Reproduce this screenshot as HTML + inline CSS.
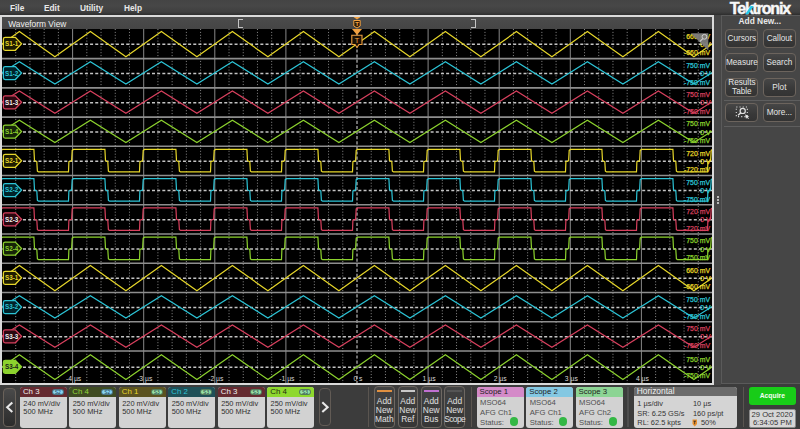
<!DOCTYPE html>
<html><head><meta charset="utf-8"><style>
*{margin:0;padding:0;box-sizing:border-box}
html,body{width:800px;height:429px;overflow:hidden;background:#3c3c3c;font-family:"Liberation Sans",sans-serif;}
.a{position:absolute}
.menu{position:absolute;top:2.6px;font-size:8.3px;font-weight:bold;color:#e8e8e8}
.btn{position:absolute;border:1px solid #6c645d;border-radius:4px;background:linear-gradient(#464646,#383838 60%,#333);color:#e6e6e6;font-size:8.2px;text-align:center;display:flex;align-items:center;justify-content:center;line-height:9px}
.card{position:absolute;top:386.5px;width:47.2px;height:41.3px;background:#d2d2d2;border-radius:3px;overflow:hidden}
.card .h{height:10px;padding-left:3.2px;font-size:7.9px;line-height:10.4px;position:relative}
.card .b{padding-left:3.6px;font-size:7.4px;line-height:8.6px;color:#303030;padding-top:3px}
.badge{position:absolute;right:3px;top:2.2px;width:12.2px;height:6.4px;border-radius:3.2px;font-size:5px;line-height:5.6px;text-align:center;color:#234;border:0.8px solid rgba(0,0,0,0.45)}
.add{position:absolute;top:386.3px;height:41.4px;width:20.5px;border:1px solid #6e6862;border-radius:4px;background:linear-gradient(#424242,#363636);color:#e0e0e0;font-size:8.4px;line-height:9px;padding-top:9.6px;display:flex;flex-direction:column;align-items:center}
.add b{font-weight:normal;white-space:nowrap;display:block}
.add i{position:absolute;left:2px;right:2px;top:3px;height:2.2px}
.sc{position:absolute;top:386.8px;width:47px;height:41px;background:#d2d2d2;border-radius:3px;overflow:hidden}
.sc .h{height:10px;padding-left:3px;font-size:7.8px;line-height:10.4px;color:#222}
.sc .b{padding-left:3.5px;font-size:7.7px;line-height:9.7px;color:#505050;padding-top:1.7px;position:relative}
</style></head><body>
<div class="a" style="left:0;top:0;width:800px;height:15px;background:linear-gradient(#444444,#474747 40%,#3f3f3f 80%,#2e2e2e)"></div>
<div class="menu" style="left:10px">File</div>
<div class="menu" style="left:44px">Edit</div>
<div class="menu" style="left:80px">Utility</div>
<div class="menu" style="left:124px">Help</div>
<div class="a" style="left:0;top:15px;width:714px;height:370px;background:#dadada"></div>
<div class="a" style="left:2px;top:17px;width:710px;height:12px;background:linear-gradient(#4c4c4c,#454545)"></div>
<div class="a" style="left:8.2px;top:18.5px;font-size:8.4px;color:#f0f0f0">Waveform View</div>
<div class="a" style="left:238px;top:19px;width:4.5px;height:9px;border:1.4px solid #c4c4c4;border-right:none"></div>
<div class="a" style="left:471px;top:19px;width:4.5px;height:9px;border:1.4px solid #c4c4c4;border-left:none"></div>
<div class="a" style="left:714px;top:15px;width:7px;height:370px;background:#464646"></div>
<div class="a" style="left:721px;top:15px;width:1px;height:369px;background:#5a5a5a"></div>
<div class="a" style="left:716.8px;top:195.6px;width:2px;height:2px;border-radius:1px;background:#e0e0e0"></div>
<div class="a" style="left:716.8px;top:198.8px;width:2px;height:2px;border-radius:1px;background:#e0e0e0"></div>
<div class="a" style="left:716.8px;top:202px;width:2px;height:2px;border-radius:1px;background:#e0e0e0"></div>
<div class="a" style="left:721px;top:15px;width:79px;height:369px;background:#464646;border:1px solid #5a5a5a;border-right:none"></div>
<div class="a" style="left:729.8px;top:0.2px;font-size:16px;font-weight:bold;color:#f8f8f8;letter-spacing:-1.2px;-webkit-text-stroke:0.45px #f8f8f8">Tektronix</div>
<svg class="a" style="left:0;top:0" width="800" height="20"><path d="M745.3 14.2 H748.3 L753.6 6.1 H750.6Z" fill="#22c8e8"/></svg>
<div class="a" style="left:738.5px;top:15.5px;font-size:8.4px;font-weight:bold;color:#e8e8e8">Add New...</div>
<div class="btn" style="left:725.3px;top:29.4px;width:33.2px;height:19px">Cursors</div>
<div class="btn" style="left:763px;top:29.4px;width:32.8px;height:19px">Callout</div>
<div class="btn" style="left:725.3px;top:53.4px;width:33.2px;height:19px">Measure</div>
<div class="btn" style="left:763px;top:53.4px;width:32.8px;height:19px">Search</div>
<div class="btn" style="left:725.3px;top:77.5px;width:33.2px;height:19px">Results<br>Table</div>
<div class="btn" style="left:763px;top:77.5px;width:32.8px;height:19px">Plot</div>
<div class="a" style="left:723.5px;top:99.5px;width:76px;height:1.2px;background:#5e5e5e"></div>
<div class="btn" style="left:725.3px;top:102.7px;width:33.2px;height:19.5px"></div>
<svg class="a" style="left:0;top:0" width="800" height="130"><path d="M736.3 107H747.3V116.6H736.3Z" fill="none" stroke="#dcdcdc" stroke-width="1.1" stroke-dasharray="1.1 2.1"/><circle cx="742.7" cy="110.9" r="2.6" fill="none" stroke="#e0e0e0" stroke-width="1.2"/><path d="M740.8 112.9L738 115.3" stroke="#e0e0e0" stroke-width="1.4"/><path d="M745.2 114.3L749.2 116.4L747.6 117L748.9 118.5L748.2 119.1L746.9 117.6L746 118.9Z" fill="#e8e8e8"/></svg>
<div class="btn" style="left:763px;top:102.7px;width:32.8px;height:19.5px">More...</div>
<div class="a" style="left:723.5px;top:126px;width:76px;height:1.2px;background:#5e5e5e"></div>
<svg width="800" height="429" viewBox="0 0 800 429" style="position:absolute;left:0;top:0">
<rect x="2" y="29" width="710" height="354" fill="#000"/>
<path d="M15.72 29V383M29.94 29V383M44.16 29V383M58.38 29V383M86.82 29V383M101.04 29V383M115.26 29V383M129.48 29V383M157.92 29V383M172.14 29V383M186.36 29V383M200.58 29V383M229.02 29V383M243.24 29V383M257.46 29V383M271.68 29V383M300.12 29V383M314.34 29V383M328.56 29V383M342.78 29V383M371.22 29V383M385.44 29V383M399.66 29V383M413.88 29V383M442.32 29V383M456.54 29V383M470.76 29V383M484.98 29V383M513.42 29V383M527.64 29V383M541.86 29V383M556.08 29V383M584.52 29V383M598.74 29V383M612.96 29V383M627.18 29V383M655.62 29V383M669.84 29V383M684.06 29V383M698.28 29V383" stroke="#8a8a8a" stroke-width="1" stroke-dasharray="1 1.9" fill="none"/>
<path d="M72.60 29V383M143.70 29V383M214.80 29V383M285.90 29V383M428.10 29V383M499.20 29V383M570.30 29V383M641.40 29V383" stroke="#888888" stroke-width="1" fill="none"/>
<path d="M357.00 29V383" stroke="#c8c8c8" stroke-width="1.1" stroke-dasharray="3.2 1.9" fill="none"/>
<path d="M2 44.20H712M2 73.45H712M2 102.70H712M2 131.95H712M2 161.20H712M2 190.45H712M2 219.70H712M2 248.95H712M2 278.20H712M2 307.45H712M2 336.70H712M2 367.20H712" stroke="#c4c4c4" stroke-width="1.4" stroke-dasharray="3.0 2.16" stroke-dashoffset="4.8" fill="none"/>
<path d="M2 58.60H712M2 87.84H712M2 117.08H712M2 146.32H712M2 175.56H712M2 204.80H712M2 234.04H712M2 263.28H712M2 292.52H712M2 321.76H712M2 351.00H712" stroke="#8e8e8e" stroke-width="1.6" fill="none"/>
<clipPath id="pc"><rect x="2" y="29" width="710" height="354"/></clipPath>
<g clip-path="url(#pc)" fill="none" stroke-width="1.2" stroke-linejoin="miter">
<path d="M-87.10 56.80 L-51.60 31.60 L-16.10 56.80 L19.40 31.60 L54.90 56.80 L90.40 31.60 L125.90 56.80 L161.40 31.60 L196.90 56.80 L232.40 31.60 L267.90 56.80 L303.40 31.60 L338.90 56.80 L374.40 31.60 L409.90 56.80 L445.40 31.60 L480.90 56.80 L516.40 31.60 L551.90 56.80 L587.40 31.60 L622.90 56.80 L658.40 31.60 L693.90 56.80 L729.40 31.60 L764.90 56.80 L800.40 31.60" stroke="#e6d62a"/>
<path d="M-87.10 84.05 L-51.60 61.65 L-16.10 84.05 L19.40 61.65 L54.90 84.05 L90.40 61.65 L125.90 84.05 L161.40 61.65 L196.90 84.05 L232.40 61.65 L267.90 84.05 L303.40 61.65 L338.90 84.05 L374.40 61.65 L409.90 84.05 L445.40 61.65 L480.90 84.05 L516.40 61.65 L551.90 84.05 L587.40 61.65 L622.90 84.05 L658.40 61.65 L693.90 84.05 L729.40 61.65 L764.90 84.05 L800.40 61.65" stroke="#2cc4d6"/>
<path d="M-87.10 113.30 L-51.60 90.90 L-16.10 113.30 L19.40 90.90 L54.90 113.30 L90.40 90.90 L125.90 113.30 L161.40 90.90 L196.90 113.30 L232.40 90.90 L267.90 113.30 L303.40 90.90 L338.90 113.30 L374.40 90.90 L409.90 113.30 L445.40 90.90 L480.90 113.30 L516.40 90.90 L551.90 113.30 L587.40 90.90 L622.90 113.30 L658.40 90.90 L693.90 113.30 L729.40 90.90 L764.90 113.30 L800.40 90.90" stroke="#d8405e"/>
<path d="M-87.10 142.55 L-51.60 120.15 L-16.10 142.55 L19.40 120.15 L54.90 142.55 L90.40 120.15 L125.90 142.55 L161.40 120.15 L196.90 142.55 L232.40 120.15 L267.90 142.55 L303.40 120.15 L338.90 142.55 L374.40 120.15 L409.90 142.55 L445.40 120.15 L480.90 142.55 L516.40 120.15 L551.90 142.55 L587.40 120.15 L622.90 142.55 L658.40 120.15 L693.90 142.55 L729.40 120.15 L764.90 142.55 L800.40 120.15" stroke="#8cd22e"/>
<path d="M-73.50 171.90 L-73.10 161.70 L-70.40 160.70 L-69.80 150.40 L-68.50 149.40 L-37.10 149.40 L-36.50 160.70 L-34.20 161.70 L-33.60 171.10 L-32.40 171.90 L-2.50 171.90 L-2.10 161.70 L0.60 160.70 L1.20 150.40 L2.50 149.40 L33.90 149.40 L34.50 160.70 L36.80 161.70 L37.40 171.10 L38.60 171.90 L68.50 171.90 L68.90 161.70 L71.60 160.70 L72.20 150.40 L73.50 149.40 L104.90 149.40 L105.50 160.70 L107.80 161.70 L108.40 171.10 L109.60 171.90 L139.50 171.90 L139.90 161.70 L142.60 160.70 L143.20 150.40 L144.50 149.40 L175.90 149.40 L176.50 160.70 L178.80 161.70 L179.40 171.10 L180.60 171.90 L210.50 171.90 L210.90 161.70 L213.60 160.70 L214.20 150.40 L215.50 149.40 L246.90 149.40 L247.50 160.70 L249.80 161.70 L250.40 171.10 L251.60 171.90 L281.50 171.90 L281.90 161.70 L284.60 160.70 L285.20 150.40 L286.50 149.40 L317.90 149.40 L318.50 160.70 L320.80 161.70 L321.40 171.10 L322.60 171.90 L352.50 171.90 L352.90 161.70 L355.60 160.70 L356.20 150.40 L357.50 149.40 L388.90 149.40 L389.50 160.70 L391.80 161.70 L392.40 171.10 L393.60 171.90 L423.50 171.90 L423.90 161.70 L426.60 160.70 L427.20 150.40 L428.50 149.40 L459.90 149.40 L460.50 160.70 L462.80 161.70 L463.40 171.10 L464.60 171.90 L494.50 171.90 L494.90 161.70 L497.60 160.70 L498.20 150.40 L499.50 149.40 L530.90 149.40 L531.50 160.70 L533.80 161.70 L534.40 171.10 L535.60 171.90 L565.50 171.90 L565.90 161.70 L568.60 160.70 L569.20 150.40 L570.50 149.40 L601.90 149.40 L602.50 160.70 L604.80 161.70 L605.40 171.10 L606.60 171.90 L636.50 171.90 L636.90 161.70 L639.60 160.70 L640.20 150.40 L641.50 149.40 L672.90 149.40 L673.50 160.70 L675.80 161.70 L676.40 171.10 L677.60 171.90 L707.50 171.90 L707.90 161.70 L710.60 160.70 L711.20 150.40 L712.50 149.40 L743.90 149.40 L744.50 160.70 L746.80 161.70 L747.40 171.10 L748.60 171.90 L778.50 171.90 L778.90 161.70 L781.60 160.70 L782.20 150.40 L783.50 149.40 L814.90 149.40 L815.50 160.70 L817.80 161.70 L818.40 171.10 L819.60 171.90" stroke="#e6d62a"/>
<path d="M-73.50 201.15 L-73.10 190.95 L-70.40 189.95 L-69.80 179.65 L-68.50 178.65 L-37.10 178.65 L-36.50 189.95 L-34.20 190.95 L-33.60 200.35 L-32.40 201.15 L-2.50 201.15 L-2.10 190.95 L0.60 189.95 L1.20 179.65 L2.50 178.65 L33.90 178.65 L34.50 189.95 L36.80 190.95 L37.40 200.35 L38.60 201.15 L68.50 201.15 L68.90 190.95 L71.60 189.95 L72.20 179.65 L73.50 178.65 L104.90 178.65 L105.50 189.95 L107.80 190.95 L108.40 200.35 L109.60 201.15 L139.50 201.15 L139.90 190.95 L142.60 189.95 L143.20 179.65 L144.50 178.65 L175.90 178.65 L176.50 189.95 L178.80 190.95 L179.40 200.35 L180.60 201.15 L210.50 201.15 L210.90 190.95 L213.60 189.95 L214.20 179.65 L215.50 178.65 L246.90 178.65 L247.50 189.95 L249.80 190.95 L250.40 200.35 L251.60 201.15 L281.50 201.15 L281.90 190.95 L284.60 189.95 L285.20 179.65 L286.50 178.65 L317.90 178.65 L318.50 189.95 L320.80 190.95 L321.40 200.35 L322.60 201.15 L352.50 201.15 L352.90 190.95 L355.60 189.95 L356.20 179.65 L357.50 178.65 L388.90 178.65 L389.50 189.95 L391.80 190.95 L392.40 200.35 L393.60 201.15 L423.50 201.15 L423.90 190.95 L426.60 189.95 L427.20 179.65 L428.50 178.65 L459.90 178.65 L460.50 189.95 L462.80 190.95 L463.40 200.35 L464.60 201.15 L494.50 201.15 L494.90 190.95 L497.60 189.95 L498.20 179.65 L499.50 178.65 L530.90 178.65 L531.50 189.95 L533.80 190.95 L534.40 200.35 L535.60 201.15 L565.50 201.15 L565.90 190.95 L568.60 189.95 L569.20 179.65 L570.50 178.65 L601.90 178.65 L602.50 189.95 L604.80 190.95 L605.40 200.35 L606.60 201.15 L636.50 201.15 L636.90 190.95 L639.60 189.95 L640.20 179.65 L641.50 178.65 L672.90 178.65 L673.50 189.95 L675.80 190.95 L676.40 200.35 L677.60 201.15 L707.50 201.15 L707.90 190.95 L710.60 189.95 L711.20 179.65 L712.50 178.65 L743.90 178.65 L744.50 189.95 L746.80 190.95 L747.40 200.35 L748.60 201.15 L778.50 201.15 L778.90 190.95 L781.60 189.95 L782.20 179.65 L783.50 178.65 L814.90 178.65 L815.50 189.95 L817.80 190.95 L818.40 200.35 L819.60 201.15" stroke="#2cc4d6"/>
<path d="M-73.50 230.40 L-73.10 220.20 L-70.40 219.20 L-69.80 208.90 L-68.50 207.90 L-37.10 207.90 L-36.50 219.20 L-34.20 220.20 L-33.60 229.60 L-32.40 230.40 L-2.50 230.40 L-2.10 220.20 L0.60 219.20 L1.20 208.90 L2.50 207.90 L33.90 207.90 L34.50 219.20 L36.80 220.20 L37.40 229.60 L38.60 230.40 L68.50 230.40 L68.90 220.20 L71.60 219.20 L72.20 208.90 L73.50 207.90 L104.90 207.90 L105.50 219.20 L107.80 220.20 L108.40 229.60 L109.60 230.40 L139.50 230.40 L139.90 220.20 L142.60 219.20 L143.20 208.90 L144.50 207.90 L175.90 207.90 L176.50 219.20 L178.80 220.20 L179.40 229.60 L180.60 230.40 L210.50 230.40 L210.90 220.20 L213.60 219.20 L214.20 208.90 L215.50 207.90 L246.90 207.90 L247.50 219.20 L249.80 220.20 L250.40 229.60 L251.60 230.40 L281.50 230.40 L281.90 220.20 L284.60 219.20 L285.20 208.90 L286.50 207.90 L317.90 207.90 L318.50 219.20 L320.80 220.20 L321.40 229.60 L322.60 230.40 L352.50 230.40 L352.90 220.20 L355.60 219.20 L356.20 208.90 L357.50 207.90 L388.90 207.90 L389.50 219.20 L391.80 220.20 L392.40 229.60 L393.60 230.40 L423.50 230.40 L423.90 220.20 L426.60 219.20 L427.20 208.90 L428.50 207.90 L459.90 207.90 L460.50 219.20 L462.80 220.20 L463.40 229.60 L464.60 230.40 L494.50 230.40 L494.90 220.20 L497.60 219.20 L498.20 208.90 L499.50 207.90 L530.90 207.90 L531.50 219.20 L533.80 220.20 L534.40 229.60 L535.60 230.40 L565.50 230.40 L565.90 220.20 L568.60 219.20 L569.20 208.90 L570.50 207.90 L601.90 207.90 L602.50 219.20 L604.80 220.20 L605.40 229.60 L606.60 230.40 L636.50 230.40 L636.90 220.20 L639.60 219.20 L640.20 208.90 L641.50 207.90 L672.90 207.90 L673.50 219.20 L675.80 220.20 L676.40 229.60 L677.60 230.40 L707.50 230.40 L707.90 220.20 L710.60 219.20 L711.20 208.90 L712.50 207.90 L743.90 207.90 L744.50 219.20 L746.80 220.20 L747.40 229.60 L748.60 230.40 L778.50 230.40 L778.90 220.20 L781.60 219.20 L782.20 208.90 L783.50 207.90 L814.90 207.90 L815.50 219.20 L817.80 220.20 L818.40 229.60 L819.60 230.40" stroke="#d8405e"/>
<path d="M-73.50 259.65 L-73.10 249.45 L-70.40 248.45 L-69.80 238.15 L-68.50 237.15 L-37.10 237.15 L-36.50 248.45 L-34.20 249.45 L-33.60 258.85 L-32.40 259.65 L-2.50 259.65 L-2.10 249.45 L0.60 248.45 L1.20 238.15 L2.50 237.15 L33.90 237.15 L34.50 248.45 L36.80 249.45 L37.40 258.85 L38.60 259.65 L68.50 259.65 L68.90 249.45 L71.60 248.45 L72.20 238.15 L73.50 237.15 L104.90 237.15 L105.50 248.45 L107.80 249.45 L108.40 258.85 L109.60 259.65 L139.50 259.65 L139.90 249.45 L142.60 248.45 L143.20 238.15 L144.50 237.15 L175.90 237.15 L176.50 248.45 L178.80 249.45 L179.40 258.85 L180.60 259.65 L210.50 259.65 L210.90 249.45 L213.60 248.45 L214.20 238.15 L215.50 237.15 L246.90 237.15 L247.50 248.45 L249.80 249.45 L250.40 258.85 L251.60 259.65 L281.50 259.65 L281.90 249.45 L284.60 248.45 L285.20 238.15 L286.50 237.15 L317.90 237.15 L318.50 248.45 L320.80 249.45 L321.40 258.85 L322.60 259.65 L352.50 259.65 L352.90 249.45 L355.60 248.45 L356.20 238.15 L357.50 237.15 L388.90 237.15 L389.50 248.45 L391.80 249.45 L392.40 258.85 L393.60 259.65 L423.50 259.65 L423.90 249.45 L426.60 248.45 L427.20 238.15 L428.50 237.15 L459.90 237.15 L460.50 248.45 L462.80 249.45 L463.40 258.85 L464.60 259.65 L494.50 259.65 L494.90 249.45 L497.60 248.45 L498.20 238.15 L499.50 237.15 L530.90 237.15 L531.50 248.45 L533.80 249.45 L534.40 258.85 L535.60 259.65 L565.50 259.65 L565.90 249.45 L568.60 248.45 L569.20 238.15 L570.50 237.15 L601.90 237.15 L602.50 248.45 L604.80 249.45 L605.40 258.85 L606.60 259.65 L636.50 259.65 L636.90 249.45 L639.60 248.45 L640.20 238.15 L641.50 237.15 L672.90 237.15 L673.50 248.45 L675.80 249.45 L676.40 258.85 L677.60 259.65 L707.50 259.65 L707.90 249.45 L710.60 248.45 L711.20 238.15 L712.50 237.15 L743.90 237.15 L744.50 248.45 L746.80 249.45 L747.40 258.85 L748.60 259.65 L778.50 259.65 L778.90 249.45 L781.60 248.45 L782.20 238.15 L783.50 237.15 L814.90 237.15 L815.50 248.45 L817.80 249.45 L818.40 258.85 L819.60 259.65" stroke="#8cd22e"/>
<path d="M-87.10 290.80 L-51.60 265.60 L-16.10 290.80 L19.40 265.60 L54.90 290.80 L90.40 265.60 L125.90 290.80 L161.40 265.60 L196.90 290.80 L232.40 265.60 L267.90 290.80 L303.40 265.60 L338.90 290.80 L374.40 265.60 L409.90 290.80 L445.40 265.60 L480.90 290.80 L516.40 265.60 L551.90 290.80 L587.40 265.60 L622.90 290.80 L658.40 265.60 L693.90 290.80 L729.40 265.60 L764.90 290.80 L800.40 265.60" stroke="#e6d62a"/>
<path d="M-87.10 318.05 L-51.60 295.65 L-16.10 318.05 L19.40 295.65 L54.90 318.05 L90.40 295.65 L125.90 318.05 L161.40 295.65 L196.90 318.05 L232.40 295.65 L267.90 318.05 L303.40 295.65 L338.90 318.05 L374.40 295.65 L409.90 318.05 L445.40 295.65 L480.90 318.05 L516.40 295.65 L551.90 318.05 L587.40 295.65 L622.90 318.05 L658.40 295.65 L693.90 318.05 L729.40 295.65 L764.90 318.05 L800.40 295.65" stroke="#2cc4d6"/>
<path d="M-87.10 347.30 L-51.60 324.90 L-16.10 347.30 L19.40 324.90 L54.90 347.30 L90.40 324.90 L125.90 347.30 L161.40 324.90 L196.90 347.30 L232.40 324.90 L267.90 347.30 L303.40 324.90 L338.90 347.30 L374.40 324.90 L409.90 347.30 L445.40 324.90 L480.90 347.30 L516.40 324.90 L551.90 347.30 L587.40 324.90 L622.90 347.30 L658.40 324.90 L693.90 347.30 L729.40 324.90 L764.90 347.30 L800.40 324.90" stroke="#d8405e"/>
<path d="M-87.10 379.60 L-51.60 354.80 L-16.10 379.60 L19.40 354.80 L54.90 379.60 L90.40 354.80 L125.90 379.60 L161.40 354.80 L196.90 379.60 L232.40 354.80 L267.90 379.60 L303.40 354.80 L338.90 379.60 L374.40 354.80 L409.90 379.60 L445.40 354.80 L480.90 379.60 L516.40 354.80 L551.90 379.60 L587.40 354.80 L622.90 379.60 L658.40 354.80 L693.90 379.60 L729.40 354.80 L764.90 379.60 L800.40 354.80" stroke="#8cd22e"/>
</g>
<g font-family="Liberation Sans" font-size="6.9" fill="#e6d62a" stroke="#e6d62a" stroke-width="0.25" text-anchor="end"><text x="710" y="38.6">660 mV</text><text x="710.5" y="46.8">0 V</text><text x="710" y="55.4">-660 mV</text></g>
<g font-family="Liberation Sans" font-size="6.9" fill="#2cc4d6" stroke="#2cc4d6" stroke-width="0.25" text-anchor="end"><text x="710" y="67.9">750 mV</text><text x="710.5" y="76.0">0 V</text><text x="710" y="84.7">-750 mV</text></g>
<g font-family="Liberation Sans" font-size="6.9" fill="#d8405e" stroke="#d8405e" stroke-width="0.25" text-anchor="end"><text x="710" y="97.1">750 mV</text><text x="710.5" y="105.3">0 V</text><text x="710" y="113.9">-750 mV</text></g>
<g font-family="Liberation Sans" font-size="6.9" fill="#8cd22e" stroke="#8cd22e" stroke-width="0.25" text-anchor="end"><text x="710" y="126.3">750 mV</text><text x="710.5" y="134.5">0 V</text><text x="710" y="143.1">-750 mV</text></g>
<g font-family="Liberation Sans" font-size="6.9" fill="#e6d62a" stroke="#e6d62a" stroke-width="0.25" text-anchor="end"><text x="710" y="155.6">720 mV</text><text x="710.5" y="163.8">0 V</text><text x="710" y="172.4">-720 mV</text></g>
<g font-family="Liberation Sans" font-size="6.9" fill="#2cc4d6" stroke="#2cc4d6" stroke-width="0.25" text-anchor="end"><text x="710" y="184.8">750 mV</text><text x="710.5" y="193.0">0 V</text><text x="710" y="201.6">-750 mV</text></g>
<g font-family="Liberation Sans" font-size="6.9" fill="#d8405e" stroke="#d8405e" stroke-width="0.25" text-anchor="end"><text x="710" y="214.1">720 mV</text><text x="710.5" y="222.3">0 V</text><text x="710" y="230.9">-720 mV</text></g>
<g font-family="Liberation Sans" font-size="6.9" fill="#8cd22e" stroke="#8cd22e" stroke-width="0.25" text-anchor="end"><text x="710" y="243.3">750 mV</text><text x="710.5" y="251.5">0 V</text><text x="710" y="260.1">-750 mV</text></g>
<g font-family="Liberation Sans" font-size="6.9" fill="#e6d62a" stroke="#e6d62a" stroke-width="0.25" text-anchor="end"><text x="710" y="272.6">660 mV</text><text x="710.5" y="280.8">0 V</text><text x="710" y="289.4">-660 mV</text></g>
<g font-family="Liberation Sans" font-size="6.9" fill="#2cc4d6" stroke="#2cc4d6" stroke-width="0.25" text-anchor="end"><text x="710" y="301.8">750 mV</text><text x="710.5" y="310.1">0 V</text><text x="710" y="318.6">-750 mV</text></g>
<g font-family="Liberation Sans" font-size="6.9" fill="#d8405e" stroke="#d8405e" stroke-width="0.25" text-anchor="end"><text x="710" y="331.1">750 mV</text><text x="710.5" y="339.3">0 V</text><text x="710" y="347.9">-750 mV</text></g>
<g font-family="Liberation Sans" font-size="6.9" fill="#8cd22e" stroke="#8cd22e" stroke-width="0.25" text-anchor="end"><text x="710" y="361.6">750 mV</text><text x="710.5" y="369.8">0 V</text><text x="710" y="378.4">-750 mV</text></g>
<path d="M5.2 37.3 H15.3 L21.6 43.8 L15.3 50.3 H5.2 Q3.4 50.3 3.4 48.5 V39.1 Q3.4 37.3 5.2 37.3Z" fill="#1e1c00" stroke="#e6d62a" stroke-width="1.25"/>
<text x="11.7" y="46.2" font-family="Liberation Sans" font-weight="bold" font-size="6.3" fill="#e6d62a" text-anchor="middle">S1-1</text>
<path d="M5.2 66.5 H15.3 L21.6 73.0 L15.3 79.5 H5.2 Q3.4 79.5 3.4 77.8 V68.3 Q3.4 66.5 5.2 66.5Z" fill="#00232a" stroke="#2cc4d6" stroke-width="1.25"/>
<text x="11.7" y="75.5" font-family="Liberation Sans" font-weight="bold" font-size="6.3" fill="#2cc4d6" text-anchor="middle">S1-2</text>
<path d="M5.2 95.8 H15.3 L21.6 102.3 L15.3 108.8 H5.2 Q3.4 108.8 3.4 107.0 V97.6 Q3.4 95.8 5.2 95.8Z" fill="#2a0810" stroke="#d8405e" stroke-width="1.25"/>
<text x="11.7" y="104.7" font-family="Liberation Sans" font-weight="bold" font-size="6.3" fill="#f0f0f0" text-anchor="middle">S1-3</text>
<path d="M5.2 125.0 H15.3 L21.6 131.5 L15.3 138.0 H5.2 Q3.4 138.0 3.4 136.2 V126.8 Q3.4 125.0 5.2 125.0Z" fill="#162408" stroke="#8cd22e" stroke-width="1.25"/>
<text x="11.7" y="133.9" font-family="Liberation Sans" font-weight="bold" font-size="6.3" fill="#8cd22e" text-anchor="middle">S1-4</text>
<path d="M5.2 154.3 H15.3 L21.6 160.8 L15.3 167.3 H5.2 Q3.4 167.3 3.4 165.5 V156.1 Q3.4 154.3 5.2 154.3Z" fill="#1e1c00" stroke="#e6d62a" stroke-width="1.25"/>
<text x="11.7" y="163.2" font-family="Liberation Sans" font-weight="bold" font-size="6.3" fill="#e6d62a" text-anchor="middle">S2-1</text>
<path d="M5.2 183.5 H15.3 L21.6 190.0 L15.3 196.5 H5.2 Q3.4 196.5 3.4 194.7 V185.3 Q3.4 183.5 5.2 183.5Z" fill="#00232a" stroke="#2cc4d6" stroke-width="1.25"/>
<text x="11.7" y="192.4" font-family="Liberation Sans" font-weight="bold" font-size="6.3" fill="#2cc4d6" text-anchor="middle">S2-2</text>
<path d="M5.2 212.8 H15.3 L21.6 219.3 L15.3 225.8 H5.2 Q3.4 225.8 3.4 224.0 V214.6 Q3.4 212.8 5.2 212.8Z" fill="#2a0810" stroke="#d8405e" stroke-width="1.25"/>
<text x="11.7" y="221.7" font-family="Liberation Sans" font-weight="bold" font-size="6.3" fill="#f0f0f0" text-anchor="middle">S2-3</text>
<path d="M5.2 242.0 H15.3 L21.6 248.5 L15.3 255.0 H5.2 Q3.4 255.0 3.4 253.2 V243.8 Q3.4 242.0 5.2 242.0Z" fill="#162408" stroke="#8cd22e" stroke-width="1.25"/>
<text x="11.7" y="250.9" font-family="Liberation Sans" font-weight="bold" font-size="6.3" fill="#8cd22e" text-anchor="middle">S2-4</text>
<path d="M5.2 271.3 H15.3 L21.6 277.8 L15.3 284.3 H5.2 Q3.4 284.3 3.4 282.5 V273.1 Q3.4 271.3 5.2 271.3Z" fill="#1e1c00" stroke="#e6d62a" stroke-width="1.25"/>
<text x="11.7" y="280.2" font-family="Liberation Sans" font-weight="bold" font-size="6.3" fill="#e6d62a" text-anchor="middle">S3-1</text>
<path d="M5.2 300.6 H15.3 L21.6 307.1 L15.3 313.6 H5.2 Q3.4 313.6 3.4 311.8 V302.4 Q3.4 300.6 5.2 300.6Z" fill="#00232a" stroke="#2cc4d6" stroke-width="1.25"/>
<text x="11.7" y="309.4" font-family="Liberation Sans" font-weight="bold" font-size="6.3" fill="#2cc4d6" text-anchor="middle">S3-2</text>
<path d="M5.2 329.8 H15.3 L21.6 336.3 L15.3 342.8 H5.2 Q3.4 342.8 3.4 341.0 V331.6 Q3.4 329.8 5.2 329.8Z" fill="#2a0810" stroke="#d8405e" stroke-width="1.25"/>
<text x="11.7" y="338.7" font-family="Liberation Sans" font-weight="bold" font-size="6.3" fill="#f0f0f0" text-anchor="middle">S3-3</text>
<path d="M5.2 360.3 H15.3 L21.6 366.8 L15.3 373.3 H5.2 Q3.4 373.3 3.4 371.5 V362.1 Q3.4 360.3 5.2 360.3Z" fill="#8cd22e" stroke="#8cd22e" stroke-width="1.25"/>
<text x="11.7" y="369.2" font-family="Liberation Sans" font-weight="bold" font-size="6.3" fill="#1a1a1a" text-anchor="middle">S3-4</text>
<text x="73.6" y="381" font-family="Liberation Sans" font-size="6.8" fill="#d8d8d8" text-anchor="middle">-4 µs</text>
<text x="144.7" y="381" font-family="Liberation Sans" font-size="6.8" fill="#d8d8d8" text-anchor="middle">-3 µs</text>
<text x="215.8" y="381" font-family="Liberation Sans" font-size="6.8" fill="#d8d8d8" text-anchor="middle">-2 µs</text>
<text x="286.9" y="381" font-family="Liberation Sans" font-size="6.8" fill="#d8d8d8" text-anchor="middle">-1 µs</text>
<text x="358.0" y="381" font-family="Liberation Sans" font-size="6.8" fill="#d8d8d8" text-anchor="middle">0 s</text>
<text x="429.1" y="381" font-family="Liberation Sans" font-size="6.8" fill="#d8d8d8" text-anchor="middle">1 µs</text>
<text x="500.2" y="381" font-family="Liberation Sans" font-size="6.8" fill="#d8d8d8" text-anchor="middle">2 µs</text>
<text x="571.3" y="381" font-family="Liberation Sans" font-size="6.8" fill="#d8d8d8" text-anchor="middle">3 µs</text>
<text x="642.4" y="381" font-family="Liberation Sans" font-size="6.8" fill="#d8d8d8" text-anchor="middle">4 µs</text>
<path d="M690.8 33.2 H708.3 V50.4 Z" fill="#7c7c7c" fill-opacity="0.95"/>
<circle cx="704.4" cy="36.8" r="2.4" fill="none" stroke="#d0d0d0" stroke-width="1"/><path d="M702.7 38.6 L699.8 41.6" stroke="#d0d0d0" stroke-width="1.2"/>
<path d="M353.5 17 H360.5 L357 19.5Z" fill="#f0a040"/>
<path d="M353.8 20.5 H360.2 V26 L357 28 L353.8 26Z" fill="#2a1a08" stroke="#f0a040" stroke-width="1"/>
<text x="357" y="25.6" font-family="Liberation Sans" font-size="6" font-weight="bold" fill="#f0a040" text-anchor="middle">T</text>
<path d="M352 29 H362 L357 35Z" fill="#f0a040"/>
<path d="M351.8 35.2 H362 V44.5 H359 L357 47.5 L355 44.5 H351.8Z" fill="#1a1005" stroke="#f0a040" stroke-width="1.1"/>
<text x="357" y="42.8" font-family="Liberation Sans" font-size="8" fill="#f0a040" text-anchor="middle">T</text>
</svg>

<div class="a" style="left:0;top:385px;width:800px;height:44px;background:#3c3c3c"></div>
<div class="a" style="left:2.9px;top:387.8px;width:13px;height:39px;border:1px solid #6a625a;border-radius:4px;background:linear-gradient(#4a4a4a,#3a3a3a 50%,#2c2c2c)"></div>
<div class="a" style="left:318.8px;top:387.8px;width:12.3px;height:38.5px;border:1px solid #625b55;border-radius:4px;background:#3c3c3c"></div>
<svg class="a" style="left:0;top:0" width="800" height="429"><path d="M12.3 402.5 L7.2 407.3 L12.3 412" fill="none" stroke="#e8e8e8" stroke-width="2.1"/><path d="M322.3 402.3 L327.6 407.2 L322.3 412" fill="none" stroke="#e8e8e8" stroke-width="2.1"/></svg>
<div class="card" style="left:19.70px"><div class="h" style="background:#652a30;color:#f2f2f2">Ch 3<span class="badge" style="background:#86d4f2">S2</span></div><div class="b">240 mV/div<br>500 MHz</div></div>
<div class="card" style="left:69.16px"><div class="h" style="background:#3f4b22;color:#92d83a">Ch 4<span class="badge" style="background:#86d4f2">S2</span></div><div class="b">250 mV/div<br>500 MHz</div></div>
<div class="card" style="left:118.62px"><div class="h" style="background:#5b5220;color:#e6d62a">Ch 1<span class="badge" style="background:#96e2a6">S3</span></div><div class="b">220 mV/div<br>500 MHz</div></div>
<div class="card" style="left:168.08px"><div class="h" style="background:#1f4f57;color:#2cc4d6">Ch 2<span class="badge" style="background:#96e2a6">S3</span></div><div class="b">250 mV/div<br>500 MHz</div></div>
<div class="card" style="left:217.54px"><div class="h" style="background:#652a30;color:#f2f2f2">Ch 3<span class="badge" style="background:#96e2a6">S3</span></div><div class="b">250 mV/div<br>500 MHz</div></div>
<div class="card" style="left:267.00px"><div class="h" style="background:#8ed82e;color:#1e2a10">Ch 4<span class="badge" style="background:#96e2a6">S3</span></div><div class="b">250 mV/div<br>500 MHz</div></div>
<div class="a" style="left:368px;top:387px;width:1px;height:40px;background:#5a5550"></div>
<div class="add" style="left:374px"><i style="background:#e09040"></i><b>Add</b><b>New</b><b>Math</b></div>
<div class="add" style="left:397.5px"><i style="background:#c8c8c8"></i><b>Add</b><b>New</b><b>Ref</b></div>
<div class="add" style="left:421px"><i style="background:#c070d0"></i><b>Add</b><b>New</b><b>Bus</b></div>
<div class="add" style="left:444.4px"><i style="background:#555555"></i><b>Add</b><b>New</b><b style="letter-spacing:-0.55px">Scope</b></div>
<div class="a" style="left:470.5px;top:387px;width:1px;height:40px;background:#5a5550"></div>
<div class="sc" style="left:476.5px"><div class="h" style="background:#d48ac8">Scope 1</div><div class="b">MSO64<br>AFG Ch1<br>Status:<span style="position:absolute;left:33px;top:20.6px;width:8.3px;height:8.3px;border-radius:50%;background:#33b845"></span></div></div>
<div class="sc" style="left:526.2px"><div class="h" style="background:#84c8e2">Scope 2</div><div class="b">MSO64<br>AFG Ch1<br>Status:<span style="position:absolute;left:33px;top:20.6px;width:8.3px;height:8.3px;border-radius:50%;background:#33b845"></span></div></div>
<div class="sc" style="left:575.5px"><div class="h" style="background:#8cd494">Scope 3</div><div class="b">MSO64<br>AFG Ch2<br>Status:<span style="position:absolute;left:33px;top:20.6px;width:8.3px;height:8.3px;border-radius:50%;background:#33b845"></span></div></div>
<div class="a" style="left:627px;top:387px;width:2px;height:40px;background:#4e4e4e"></div>
<div class="a" style="left:633.8px;top:387.3px;width:103.2px;height:40.4px;background:#d4d4d4;border-radius:3px;overflow:hidden">
<div style="height:9px;background:#6b6b6b;color:#f0f0f0;font-size:8.4px;line-height:9.5px;padding-left:3px">Horizontal</div>
<div style="position:absolute;left:3.5px;top:11.6px;font-size:7.4px;line-height:9.7px;color:#333">1 µs/div<br>SR: 6.25 GS/s<br>RL: 62.5 kpts</div>
<div style="position:absolute;left:59.2px;top:11.6px;font-size:7.4px;line-height:9.7px;color:#333">10 µs<br>160 ps/pt<br><span style="display:inline-block;width:8px"></span>50%</div>
<svg style="position:absolute;left:58.3px;top:32px" width="6" height="8"><path d="M0.5 0.5H5V5L2.75 7.5L0.5 5Z" fill="#e89030"/><path d="M1.5 1.8H4V2.6H3.1V5.2H2.4V2.6H1.5Z" fill="#222"/></svg>
</div>
<div class="a" style="left:743px;top:387px;width:1px;height:40px;background:#5a5550"></div>
<div class="a" style="left:749px;top:386.5px;width:46.6px;height:18px;background:#18cc18;border-radius:3px;color:#f4fff4;font-size:6.8px;font-weight:bold;text-align:center;line-height:18px">Acquire</div>
<div class="a" style="left:749px;top:409.2px;width:46.6px;height:18.4px;background:#d6d6d6;border:1px solid #8a8a8a;border-radius:2px;color:#333;font-size:7.6px;text-align:center;line-height:8.6px;padding-top:0.6px">29 Oct 2020<br>6:34:05 PM</div>
</body></html>
